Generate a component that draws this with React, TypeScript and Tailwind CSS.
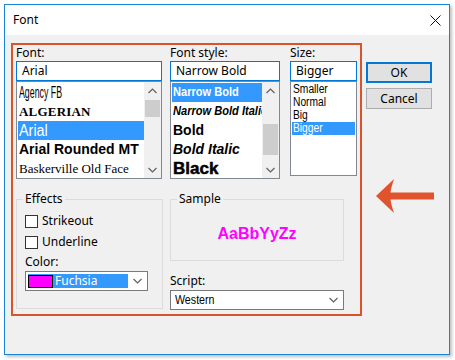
import React from 'react';

const ui = "font-['Noto_Sans',sans-serif] text-[12px] text-black";

function Chevron({ up = false, className = '' }: { up?: boolean; className?: string }) {
  return (
    <svg width="9" height="6" viewBox="0 0 9 6" className={className}>
      <polyline
        points={up ? '0.5,5 4.5,1 8.5,5' : '0.5,1 4.5,5 8.5,1'}
        fill="none"
        stroke="#606060"
        strokeWidth="1.2"
      />
    </svg>
  );
}

function ScrollBar({ thumbTop, thumbHeight }: { thumbTop: number; thumbHeight: number }) {
  return (
    <div className="w-[17px] bg-[#f0f0f0] flex flex-col">
      <div className="h-[17px] flex items-center justify-center">
        <Chevron up />
      </div>
      <div className="flex-1 flex flex-col">
        <div style={{ height: thumbTop }} />
        <div className="bg-[#cdcdcd] mx-[1px]" style={{ height: thumbHeight }} />
      </div>
      <div className="h-[17px] flex items-center justify-center">
        <Chevron />
      </div>
    </div>
  );
}

function Row({ children, selected = false, h = 'h-[19px]' }: { children: React.ReactNode; selected?: boolean; h?: string }) {
  return (
    <div
      className={`${h} flex items-center pl-[1px] whitespace-nowrap overflow-hidden ${
        selected ? 'bg-[#3399ff] text-white' : 'text-black'
      }`}
    >
      {children}
    </div>
  );
}

function GroupLabel({ children }: { children: React.ReactNode }) {
  return (
    <span className="block w-fit -mt-[9px] ml-[6px] px-[2px] h-[16px] leading-[16px] bg-[#f0f0f0]">
      {children}
    </span>
  );
}

export default function App() {
  return (
    <div className={`w-[455px] h-[360px] bg-white pt-[4px] pl-[4px] ${ui}`}>
      <div className="w-[446px] h-[351px] border border-[#1883d7] flex flex-col shadow-[2px_2px_3px_rgba(0,0,0,0.25)]">
        {/* Title bar */}
        <div className="h-[30px] bg-white flex items-center pl-[8px] pr-[8px]">
          <span className="text-[12px]">Font</span>
          <svg width="11" height="11" viewBox="0 0 11 11" className="ml-auto">
            <path d="M0.5 0.5 L10.5 10.5 M10.5 0.5 L0.5 10.5" stroke="#111" strokeWidth="1" />
          </svg>
        </div>

        {/* Body */}
        <div className="flex-1 bg-[#f0f0f0] flex items-start">
          <div className="ml-[6px] mt-[8px] w-[351px] h-[273px] border-2 border-[#d9532b] pl-[3px] pr-[3px]">
            {/* Lists */}
            <div className="flex">
              {/* Font */}
              <div className="w-[146px]">
                <div className="h-[16px] leading-[16px]">Font:</div>
                <div className="h-[20px] border border-[#0078d7] bg-white pl-[5px] leading-[18px]">Arial</div>
                <div className="h-[98px] border border-[#828790] bg-white flex">
                  <div className="flex-1 pt-[1px] pl-[1px] min-w-0">
                    <Row>
                      <span className="inline-block origin-left scale-x-[0.55] font-['Liberation_Sans',sans-serif] text-[16px]">
                        Agency FB
                      </span>
                    </Row>
                    <Row>
                      <span className="font-['Liberation_Serif',serif] font-bold text-[13px] tracking-[0.2px]">ALGERIAN</span>
                    </Row>
                    <Row selected>
                      <span className="inline-block origin-left scale-x-[0.9] font-['Liberation_Sans',sans-serif] text-[16px]">Arial</span>
                    </Row>
                    <Row>
                      <span className="font-['Liberation_Sans',sans-serif] font-bold text-[14px]">Arial Rounded MT</span>
                    </Row>
                    <Row>
                      <span className="font-['Liberation_Serif',serif] text-[13px]">Baskerville Old Face</span>
                    </Row>
                  </div>
                  <ScrollBar thumbTop={1} thumbHeight={17} />
                </div>
              </div>

              {/* Font style */}
              <div className="w-[110px] ml-[8px]">
                <div className="h-[16px] leading-[16px]">Font style:</div>
                <div className="h-[20px] border border-[#0078d7] bg-white pl-[5px] leading-[18px]">Narrow Bold</div>
                <div className="h-[98px] border border-[#828790] bg-white flex">
                  <div className="flex-1 pt-[1px] pl-[1px] min-w-0">
                    <Row selected>
                      <span className="inline-block origin-left scale-x-[0.82] font-['Liberation_Sans',sans-serif] font-bold text-[13.5px]">
                        Narrow Bold
                      </span>
                    </Row>
                    <Row>
                      <span className="inline-block origin-left scale-x-[0.82] font-['Liberation_Sans',sans-serif] font-bold italic text-[13.5px]">
                        Narrow Bold Italic
                      </span>
                    </Row>
                    <Row>
                      <span className="font-['Liberation_Sans',sans-serif] font-bold text-[14px]">Bold</span>
                    </Row>
                    <Row>
                      <span className="font-['Liberation_Sans',sans-serif] font-bold italic text-[14px]">Bold Italic</span>
                    </Row>
                    <Row>
                      <span className="font-['Liberation_Sans',sans-serif] font-bold text-[17px] [-webkit-text-stroke:0.5px_black]">
                        Black
                      </span>
                    </Row>
                  </div>
                  <ScrollBar thumbTop={25} thumbHeight={31} />
                </div>
              </div>

              {/* Size */}
              <div className="w-[67px] ml-[10px]">
                <div className="h-[16px] leading-[16px]">Size:</div>
                <div className="h-[20px] border border-[#0078d7] bg-white pl-[5px] leading-[18px]">Bigger</div>
                <div className="h-[95px] border border-[#828790] bg-white pt-[1px] px-[1px]">
                  {['Smaller', 'Normal', 'Big', 'Bigger'].map((s) => (
                    <Row key={s} selected={s === 'Bigger'} h="h-[13px]">
                      <span className="inline-block origin-left scale-x-[0.82] font-['Liberation_Sans',sans-serif] text-[12.5px] leading-[13px]">
                        {s}
                      </span>
                    </Row>
                  ))}
                </div>
              </div>
            </div>

            {/* Effects / Sample */}
            <div className="flex mt-[20px]">
              <div className="w-[147px] h-[110px] border border-[#dcdcdc] pl-[8px]">
                <span className="block w-fit -mt-[9px] -ml-[2px] px-[2px] h-[16px] leading-[16px] bg-[#f0f0f0]">Effects</span>
                <div className="mt-[6px] h-[16px] flex items-center">
                  <span className="w-[13px] h-[13px] border border-[#333] bg-white" />
                  <span className="ml-[4px]">Strikeout</span>
                </div>
                <div className="mt-[5px] h-[16px] flex items-center">
                  <span className="w-[13px] h-[13px] border border-[#333] bg-white" />
                  <span className="ml-[4px]">Underline</span>
                </div>
                <div className="mt-[4px] h-[16px] leading-[16px]">Color:</div>
                <div className="mt-[1px] w-[123px] h-[20px] border border-[#7a7a7a] bg-white flex items-center pl-[2px] pr-[5px]">
                  <div className="w-[100px] h-[14px] bg-[#3399ff] flex items-center">
                    <span className="w-[25px] h-[13px] border border-black bg-[#ff00ff]" />
                    <span className="ml-[2px] text-white">Fuchsia</span>
                  </div>
                  <Chevron className="ml-auto" />
                </div>
              </div>

              <div className="ml-[7px] flex flex-col">
                <div className="w-[174px] h-[62px] border border-[#dcdcdc]">
                  <GroupLabel>Sample</GroupLabel>
                  <div className="mt-[17px] h-[20px] leading-[20px] text-center font-['Liberation_Sans',sans-serif] font-bold text-[16px] text-[#ff00ff]">
                    AaBbYyZz
                  </div>
                </div>
                <div className="mt-[12px] h-[16px] leading-[16px]">Script:</div>
                <div className="mt-[1px] w-[174px] h-[20px] border border-[#7a7a7a] bg-white flex items-center pl-[4px] pr-[5px]">
                  <span className="inline-block origin-left scale-x-[0.82] font-['Liberation_Sans',sans-serif] text-[13px]">
                    Western
                  </span>
                  <Chevron className="ml-auto" />
                </div>
              </div>
            </div>
          </div>

          {/* Buttons */}
          <div className="ml-[4px] mt-[27px] w-[66px] flex flex-col">
            <button className="h-[21px] border-2 border-[#0078d7] bg-[#e1e1e1] leading-[17px]">OK</button>
            <button className="mt-[5px] h-[21px] border border-[#adadad] bg-[#e1e1e1] leading-[19px]">Cancel</button>
            <svg width="60" height="36" viewBox="0 0 60 36" className="mt-[70px] ml-[10px] overflow-visible">
              <path
                d="M0 17 L18 0 C16 6 15 10 14.5 13.5 L58 13.5 L58 20.5 L14.5 20.5 C15 24 16 28 18 34 Z"
                fill="#e0542d"
              />
            </svg>
          </div>
        </div>
      </div>
    </div>
  );
}
